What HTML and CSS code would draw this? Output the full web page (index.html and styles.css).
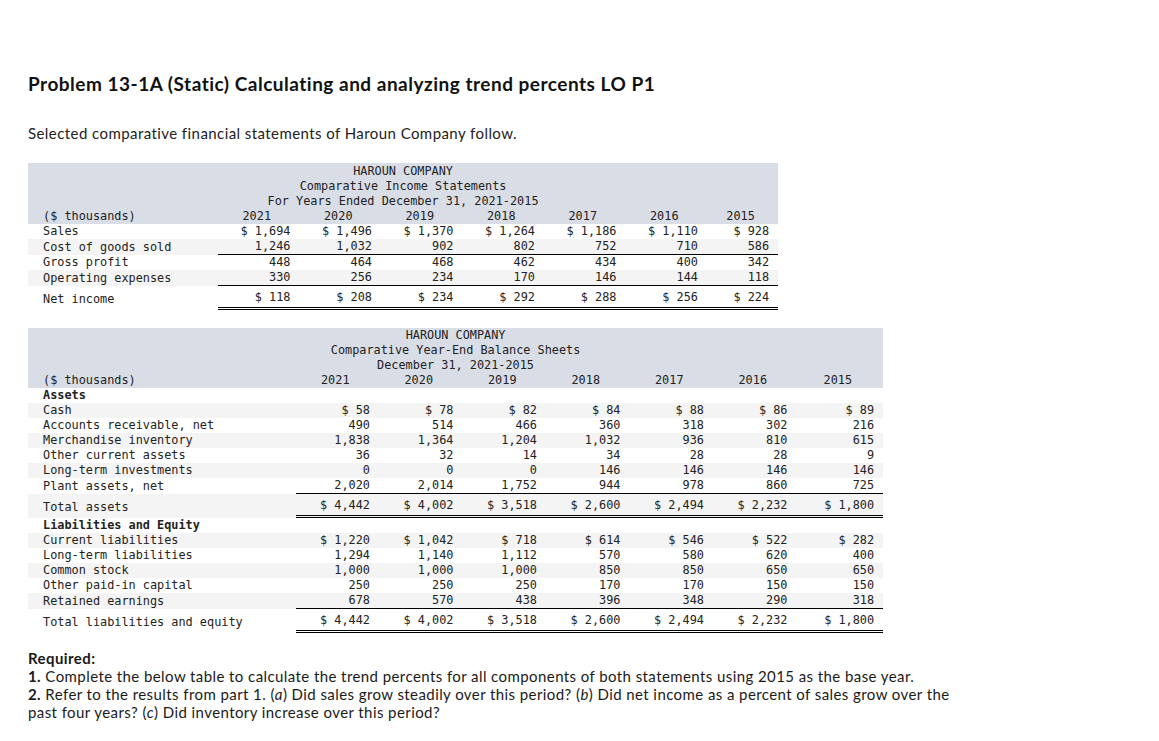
FILE: index.html
```html
<!DOCTYPE html>
<html>
<head>
<meta charset="utf-8">
<link rel="stylesheet" href="styles.css">
</head>
<body>
<div class="page">
  <h1 class="title">Problem 13-1A (Static) Calculating and analyzing trend percents LO P1</h1>
  <p class="intro">Selected comparative financial statements of Haroun Company follow.</p>

  <table class="fin income">
    <colgroup>
      <col class="c-label-inc"><col class="c-inc"><col class="c-inc"><col class="c-inc"><col class="c-inc"><col class="c-inc"><col class="c-inc"><col class="c-inc-last">
    </colgroup>
    <thead>
      <tr><th colspan="8" class="ttl first">HAROUN COMPANY</th></tr>
      <tr><th colspan="8" class="ttl">Comparative Income Statements</th></tr>
      <tr><th colspan="8" class="ttl">For Years Ended December 31, 2021-2015</th></tr>
      <tr class="years"><th class="lbl">($ thousands)</th><th>2021</th><th>2020</th><th>2019</th><th>2018</th><th>2017</th><th>2016</th><th>2015</th></tr>
    </thead>
    <tbody>
      <tr><td class="lbl">Sales</td><td>$ 1,694</td><td>$ 1,496</td><td>$ 1,370</td><td>$ 1,264</td><td>$ 1,186</td><td>$ 1,110</td><td>$ 928</td></tr>
      <tr class="alt rule"><td class="lbl">Cost of goods sold</td><td>1,246</td><td>1,032</td><td>902</td><td>802</td><td>752</td><td>710</td><td>586</td></tr>
      <tr><td class="lbl">Gross profit</td><td>448</td><td>464</td><td>468</td><td>462</td><td>434</td><td>400</td><td>342</td></tr>
      <tr class="alt rule"><td class="lbl">Operating expenses</td><td>330</td><td>256</td><td>234</td><td>170</td><td>146</td><td>144</td><td>118</td></tr>
      <tr class="total"><td class="lbl">Net income</td><td>$ 118</td><td>$ 208</td><td>$ 234</td><td>$ 292</td><td>$ 288</td><td>$ 256</td><td>$ 224</td></tr>
    </tbody>
  </table>

  <table class="fin balance">
    <colgroup>
      <col class="c-label-bal"><col class="c-bal"><col class="c-bal"><col class="c-bal"><col class="c-bal"><col class="c-bal"><col class="c-bal"><col class="c-bal-last">
    </colgroup>
    <thead>
      <tr><th colspan="8" class="ttl">HAROUN COMPANY</th></tr>
      <tr><th colspan="8" class="ttl">Comparative Year-End Balance Sheets</th></tr>
      <tr><th colspan="8" class="ttl">December 31, 2021-2015</th></tr>
      <tr class="years"><th class="lbl">($ thousands)</th><th>2021</th><th>2020</th><th>2019</th><th>2018</th><th>2017</th><th>2016</th><th>2015</th></tr>
    </thead>
    <tbody>
      <tr><td class="lbl sec">Assets</td><td></td><td></td><td></td><td></td><td></td><td></td><td></td></tr>
      <tr class="alt"><td class="lbl">Cash</td><td>$ 58</td><td>$ 78</td><td>$ 82</td><td>$ 84</td><td>$ 88</td><td>$ 86</td><td>$ 89</td></tr>
      <tr><td class="lbl">Accounts receivable, net</td><td>490</td><td>514</td><td>466</td><td>360</td><td>318</td><td>302</td><td>216</td></tr>
      <tr class="alt"><td class="lbl">Merchandise inventory</td><td>1,838</td><td>1,364</td><td>1,204</td><td>1,032</td><td>936</td><td>810</td><td>615</td></tr>
      <tr><td class="lbl">Other current assets</td><td>36</td><td>32</td><td>14</td><td>34</td><td>28</td><td>28</td><td>9</td></tr>
      <tr class="alt"><td class="lbl">Long-term investments</td><td>0</td><td>0</td><td>0</td><td>146</td><td>146</td><td>146</td><td>146</td></tr>
      <tr class="rule"><td class="lbl">Plant assets, net</td><td>2,020</td><td>2,014</td><td>1,752</td><td>944</td><td>978</td><td>860</td><td>725</td></tr>
      <tr class="alt total"><td class="lbl">Total assets</td><td>$ 4,442</td><td>$ 4,002</td><td>$ 3,518</td><td>$ 2,600</td><td>$ 2,494</td><td>$ 2,232</td><td>$ 1,800</td></tr>
      <tr><td class="lbl sec">Liabilities and Equity</td><td></td><td></td><td></td><td></td><td></td><td></td><td></td></tr>
      <tr class="alt"><td class="lbl">Current liabilities</td><td>$ 1,220</td><td>$ 1,042</td><td>$ 718</td><td>$ 614</td><td>$ 546</td><td>$ 522</td><td>$ 282</td></tr>
      <tr><td class="lbl">Long-term liabilities</td><td>1,294</td><td>1,140</td><td>1,112</td><td>570</td><td>580</td><td>620</td><td>400</td></tr>
      <tr class="alt"><td class="lbl">Common stock</td><td>1,000</td><td>1,000</td><td>1,000</td><td>850</td><td>850</td><td>650</td><td>650</td></tr>
      <tr><td class="lbl">Other paid-in capital</td><td>250</td><td>250</td><td>250</td><td>170</td><td>170</td><td>150</td><td>150</td></tr>
      <tr class="alt rule"><td class="lbl">Retained earnings</td><td>678</td><td>570</td><td>438</td><td>396</td><td>348</td><td>290</td><td>318</td></tr>
      <tr class="total"><td class="lbl">Total liabilities and equity</td><td>$ 4,442</td><td>$ 4,002</td><td>$ 3,518</td><td>$ 2,600</td><td>$ 2,494</td><td>$ 2,232</td><td>$ 1,800</td></tr>
    </tbody>
  </table>

  <div class="required">
    <p class="req-head">Required:</p>
    <p><b>1.</b> Complete the below table to calculate the trend percents for all components of both statements using 2015 as the base year.</p>
    <p><b>2.</b> Refer to the results from part 1. (<i>a</i>) Did sales grow steadily over this period? (<i>b</i>) Did net income as a percent of sales grow over the past four years? (<i>c</i>) Did inventory increase over this period?</p>
  </div>
</div>
</body>
</html>
```

FILE: styles.css
```css
html, body {
  margin: 0;
  padding: 0;
  background: #ffffff;
}

.page {
  padding: 70px 0 0 28px;
  font-family: "Lato", "Open Sans", "Liberation Sans", sans-serif;
  color: #1a1a1a;
}

.title {
  margin: 0;
  font-size: 19px;
  line-height: 28px;
  font-weight: 700;
  letter-spacing: 0.5px;
  color: #111111;
}

.intro {
  margin: 25px 0 0 0;
  font-size: 15px;
  line-height: 20px;
  letter-spacing: 0.43px;
  color: #222222;
}

.fin {
  border-collapse: separate;
  border-spacing: 0;
  table-layout: fixed;
  font-family: "DejaVu Sans Mono", "Liberation Mono", monospace;
  font-size: 11.85px;
  line-height: 15px;
  color: #222222;
}

.income {
  width: 750px;
  margin-top: 20px;
}

.balance {
  width: 855px;
  margin-top: 18px;
}

.c-label-inc { width: 190px; }
.c-inc { width: 81.5px; }
.c-inc-last { width: 71px; }

.c-label-bal { width: 267.5px; }
.c-bal { width: 83.5px; }
.c-bal-last { width: 86.5px; }

.fin thead {
  background: #d9dde6;
}

.fin th {
  font-weight: 400;
  padding: 0;
  height: 15px;
  white-space: nowrap;
}

.fin th.ttl {
  text-align: center;
}

.fin th.first {
  padding-top: 1px;
}

.fin .years th {
  text-align: center;
  padding-right: 4px;
}

.fin .years th.lbl {
  text-align: left;
}

.fin td {
  padding: 0 9px 0 0;
  height: 15px;
  text-align: right;
  white-space: nowrap;
}

.fin .lbl {
  text-align: left;
  padding-left: 15px;
  padding-right: 0;
}

.fin .sec {
  font-weight: 700;
}

.fin tr.alt {
  background: #f4f4f4;
}

.fin tr.rule td:not(.lbl) {
  border-bottom: 1px solid #000000;
}

.fin tr.total td {
  padding-top: 4px;
  padding-bottom: 2px;
}

.fin tr.total td:not(.lbl) {
  border-bottom: 3px double #000000;
}

.required {
  margin-top: 16px;
  width: 930px;
  font-size: 15px;
  line-height: 18px;
  letter-spacing: 0.42px;
  color: #1a1a1a;
}

.required p {
  margin: 0;
}

.required .req-head {
  font-weight: 700;
}
```
